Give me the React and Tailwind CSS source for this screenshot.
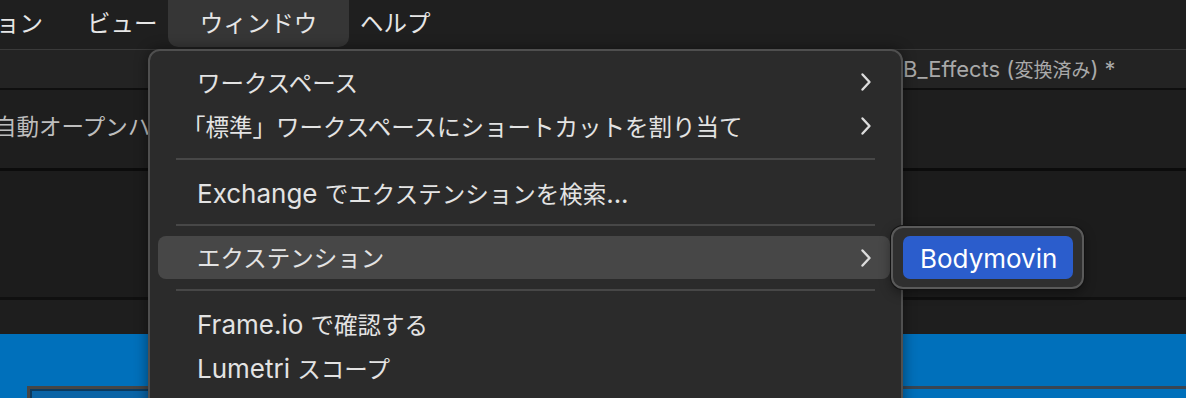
import React from 'react';

// 日本語とラテン文字でサイズを変える（macOSメニューの見た目に合わせる）
const CJK = /[\u3000-\u30ff\u4e00-\u9fff\uff00-\uffef]/;

const Mixed = ({ text, latin, cjk }) =>
  text
    .split(/([\u3000-\u30ff\u4e00-\u9fff\uff00-\uffef]+)/)
    .filter(Boolean)
    .map((part, i) => (
      <span key={i} className={CJK.test(part) ? cjk : latin}>
        {part}
      </span>
    ));

const Chevron = () => (
  <svg width="12" height="20" viewBox="0 0 12 20" fill="none">
    <polyline points="2.5,2.5 9.5,10 2.5,17.5" stroke="#dcdcdc" strokeWidth="2.4" strokeLinecap="round" strokeLinejoin="round" />
  </svg>
);

const items = [
  { label: 'ワークスペース', sub: true },
  { label: '「標準」ワークスペースにショートカットを割り当て', sub: true, shift: true },
  { sep: true },
  { label: 'Exchange でエクステンションを検索...' },
  { sep: true },
  { label: 'エクステンション', sub: true, active: true },
  { sep: true },
  { label: 'Frame.io で確認する' },
  { label: 'Lumetri スコープ' },
];

const App = () => {
  return (
    <div className="relative h-[398px] w-[1186px] overflow-hidden bg-[#1c1c1c] font-['Inter','Noto_Sans_CJK_JP',sans-serif]">
      {/* メニューバー */}
      <div className="flex h-[49px] items-start bg-[#1f1f1f] text-[23.5px] leading-none text-[#e6e6e6]">
        <div className="-ml-[4px] flex h-[48px] w-[91px] items-center">ョン</div>
        <div className="flex h-[48px] w-[81px] items-center">ビュー</div>
        <div className="flex h-[47px] w-[181px] items-center justify-center rounded-b-[10px] bg-[#363636] pt-[1px]">ウィンドウ</div>
        <div className="ml-[11px] flex h-[48px] items-center">ヘルプ</div>
      </div>

      {/* 背景のパネル */}
      <div className="flex h-[41px] items-center border-t border-b-2 border-t-[#3a3a3a] border-b-[#0f0f0f] bg-[#232323] text-[#a9a9a9]">
        <div className="w-[903px] shrink-0" />
        <div className="leading-none">
          <Mixed text="B_Effects (変換済み) *" latin="text-[22px]" cjk="text-[19px]" />
        </div>
      </div>
      <div className="flex h-[81px] items-center border-b-[3px] border-[#0c0c0c] bg-[#1e1e1e] pb-[4px]">
        <span className="-ml-[6px] text-[22.5px] leading-none text-[#bdbdbd]">自動オープンハイライト</span>
      </div>
      <div className="h-[129px] border-b-[3px] border-[#101010] bg-[#1c1c1c]" />
      <div className="h-[34px] bg-[#1e1e1e]" />
      <div className="flex h-[64px] flex-col bg-[#0070bb]">
        <div className="h-[52px] shrink-0" />
        <div className="flex flex-1">
          <div className="w-[27px] shrink-0" />
          <div className="w-[874px] shrink-0 border-t-[3px] border-l-[3px] border-[#464646] bg-[#0a64a6] shadow-[inset_2px_2px_0_#0b3a5e]" />
          <div className="flex-1 border-t-[3px] border-[#3a4653]" />
        </div>
      </div>

      {/* ウィンドウメニュー */}
      <div className="absolute left-[148px] top-[49px] h-[372px] w-[755px] rounded-t-[12px] border-2 border-[#4f4f4f] bg-[#2b2b2b] pt-[9px] text-[#e3e3e3] shadow-[0_0_14px_rgba(0,0,0,0.45)]">
        {items.map((item, i) =>
          item.sep ? (
            <div key={i} className="flex h-[22px] items-center px-[26px]">
              <div className="h-[2px] w-full bg-[#474747]" />
            </div>
          ) : (
            <div
              key={i}
              className={
                item.active
                  ? 'ml-[8px] mr-[11px] flex h-[43px] items-center justify-between rounded-[8px] bg-[#474747] pl-[39px] pr-[18px]'
                  : 'flex h-[44px] items-center justify-between pl-[47px] pr-[29px]'
              }
            >
              <div className={item.shift ? '-ml-[15px] pt-[3px] leading-none' : 'pt-[3px] leading-none'}>
                <Mixed text={item.label} latin="text-[26px]" cjk="text-[23.5px]" />
              </div>
              {item.sub && <Chevron />}
            </div>
          )
        )}
      </div>

      {/* サブメニュー */}
      <div className="absolute left-[891px] top-[226px] h-[63px] w-[193px] rounded-[12px] border-2 border-[#5a5a5a] bg-[#2f2f2f] pt-[8px] pl-[10px] shadow-[0_0_0_1px_#121212,0_4px_12px_rgba(0,0,0,0.4)]">
        <div className="flex h-[43px] w-[170px] items-center rounded-[7px] bg-[#2b5dcc] pl-[17px] pt-[2px] text-[26px] leading-none text-white">
          Bodymovin
        </div>
      </div>
    </div>
  );
};

export default App;
